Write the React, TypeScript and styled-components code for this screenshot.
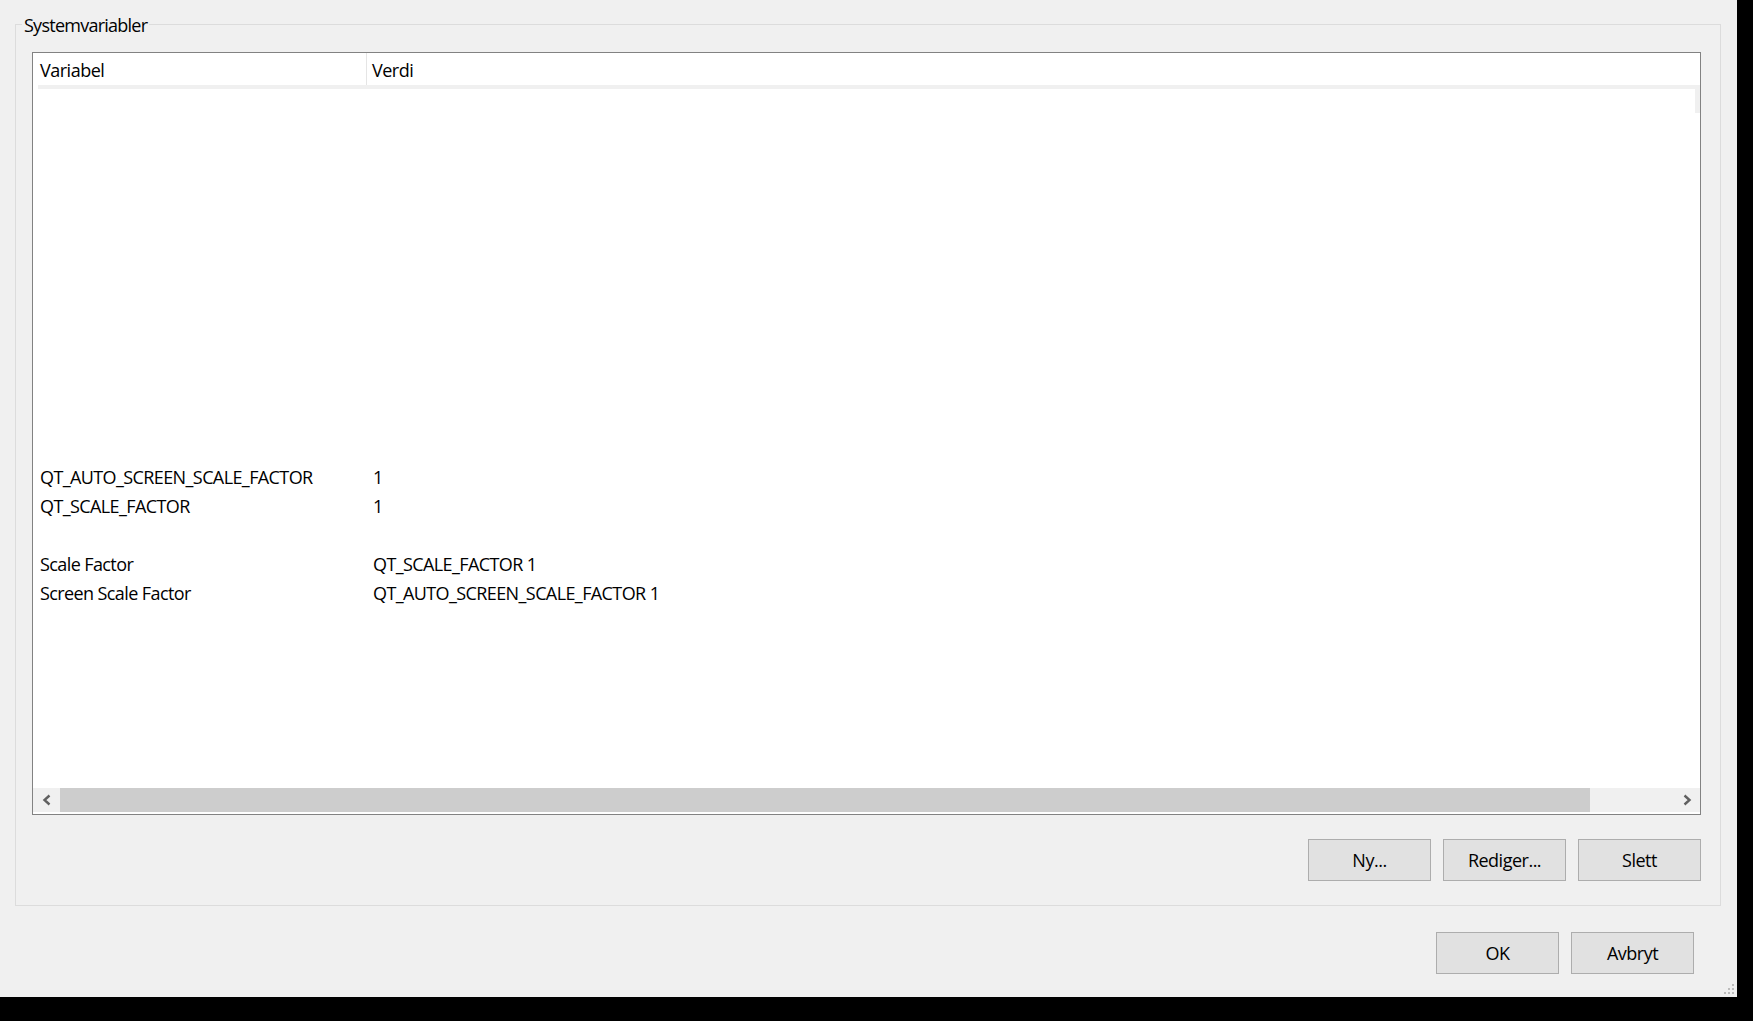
import React from 'react'
import styled, { createGlobalStyle } from 'styled-components'

const GlobalStyle = createGlobalStyle`
	html, body {
		margin: 0;
		background: #000;
	}
	body {
		font-family: "Open Sans", "Noto Sans", sans-serif;
		font-size: 18px;
		color: #000;
	}
`

const Window = styled.div`
	position: relative;
	box-sizing: border-box;
	width: 1737px;
	height: 997px;
	padding: 11px 16px 0 15px;
	background: #f0f0f0;
	display: flex;
	flex-direction: column;
`

const Group = styled.fieldset`
	margin: 0;
	min-inline-size: 0;
	border: 1px solid #dcdcdc;
	padding: 15px 19px 24px 16px;
	display: flex;
	flex-direction: column;
`

const GroupTitle = styled.legend`
	margin-left: -10px;
	padding: 2px 2px 0;
	line-height: 24px;
	font-size: 18px;
	letter-spacing: -0.75px;
`

const Table = styled.div`
	box-sizing: border-box;
	height: 763px;
	border: 1px solid #828282;
	background: #fff;
	display: flex;
	flex-direction: column;
	padding-bottom: 2px;
`

const Columns = styled.div`
	display: grid;
	grid-template-columns: 334px 1fr;
`

const HeaderRow = styled(Columns)`
	box-sizing: border-box;
	height: 32px;
	padding-top: 2px;
	line-height: 30px;
`

const HeaderCell = styled.div<{ $first?: boolean }>`
	box-sizing: border-box;
	padding-left: ${p => (p.$first ? '7px' : '5px')};
	border-right: ${p => (p.$first ? '1px solid #e5e5e5' : 'none')};
	margin-top: -2px;
	padding-top: 2px;
	letter-spacing: -0.5px;
`

const Body = styled.div`
	position: relative;
	flex: 1;
	overflow: hidden;
	padding-top: 1px;

	&::before {
		content: '';
		position: absolute;
		top: 0;
		left: 5px;
		right: 0;
		height: 4px;
		background: #f0f0f0;
	}
	&::after {
		content: '';
		position: absolute;
		top: 0;
		right: 0;
		width: 5px;
		height: 28px;
		background: #f0f0f0;
	}
`

const Row = styled(Columns)`
	height: 29px;
	line-height: 29px;
	white-space: nowrap;
`

const Cell = styled.div<{ $first?: boolean }>`
	padding-left: ${p => (p.$first ? '7px' : '6px')};
	letter-spacing: -0.6px;
`

const ScrollBar = styled.div`
	height: 24px;
	display: flex;
	background: #f0f0f0;
`

const ScrollArrow = styled.div`
	width: 27px;
	display: flex;
	align-items: center;
	justify-content: center;
`

const Track = styled.div`
	flex: 1;
	display: flex;
`

const Thumb = styled.div`
	width: 1530px;
	background: #cdcdcd;
`

const ButtonRow = styled.div<{ $top: number; $right: number }>`
	display: flex;
	justify-content: flex-end;
	gap: 12px;
	margin-top: ${p => p.$top}px;
	margin-right: ${p => p.$right}px;
`

const Button = styled.button`
	box-sizing: border-box;
	width: 123px;
	height: 42px;
	padding: 0;
	background: #e1e1e1;
	border: 1px solid #adadad;
	font-family: inherit;
	font-size: 18px;
	letter-spacing: -0.5px;
	color: #000;
`

const Grip = styled.svg`
	position: absolute;
	right: 2px;
	bottom: 2px;
`

const Chevron = ({ dir }: { dir: 'left' | 'right' }) => (
	<svg width="10" height="12" viewBox="0 0 10 12">
		<polyline
			points={dir === 'left' ? '7.5,1.5 2.5,6 7.5,10.5' : '2.5,1.5 7.5,6 2.5,10.5'}
			fill="none"
			stroke="#606060"
			strokeWidth="2.4"
		/>
	</svg>
)

const rows: Array<[string, string]> = [
	...Array.from({ length: 13 }, () => ['', ''] as [string, string]),
	['QT_AUTO_SCREEN_SCALE_FACTOR', '1'],
	['QT_SCALE_FACTOR', '1'],
	['', ''],
	['Scale Factor', 'QT_SCALE_FACTOR 1'],
	['Screen Scale Factor', 'QT_AUTO_SCREEN_SCALE_FACTOR 1']
]

export default function App() {
	return (
		<>
			<GlobalStyle />
			<Window>
				<Group>
					<GroupTitle>Systemvariabler</GroupTitle>
					<Table>
						<HeaderRow>
							<HeaderCell $first>Variabel</HeaderCell>
							<HeaderCell>Verdi</HeaderCell>
						</HeaderRow>
						<Body>
							{rows.map(([name, value], i) => (
								<Row key={i}>
									<Cell $first>{name}</Cell>
									<Cell>{value}</Cell>
								</Row>
							))}
						</Body>
						<ScrollBar>
							<ScrollArrow>
								<Chevron dir="left" />
							</ScrollArrow>
							<Track>
								<Thumb />
							</Track>
							<ScrollArrow>
								<Chevron dir="right" />
							</ScrollArrow>
						</ScrollBar>
					</Table>
					<ButtonRow $top={24} $right={0}>
						<Button>Ny...</Button>
						<Button>Rediger...</Button>
						<Button>Slett</Button>
					</ButtonRow>
				</Group>
				<ButtonRow $top={26} $right={27}>
					<Button>OK</Button>
					<Button>Avbryt</Button>
				</ButtonRow>
				<Grip width="12" height="12" viewBox="0 0 12 12">
					{[
						[9, 1],
						[5, 5],
						[9, 5],
						[1, 9],
						[5, 9],
						[9, 9]
					].map(([x, y]) => (
						<rect key={`${x}-${y}`} x={x} y={y} width="2" height="2" fill="#bcbcbc" />
					))}
				</Grip>
			</Window>
		</>
	)
}
